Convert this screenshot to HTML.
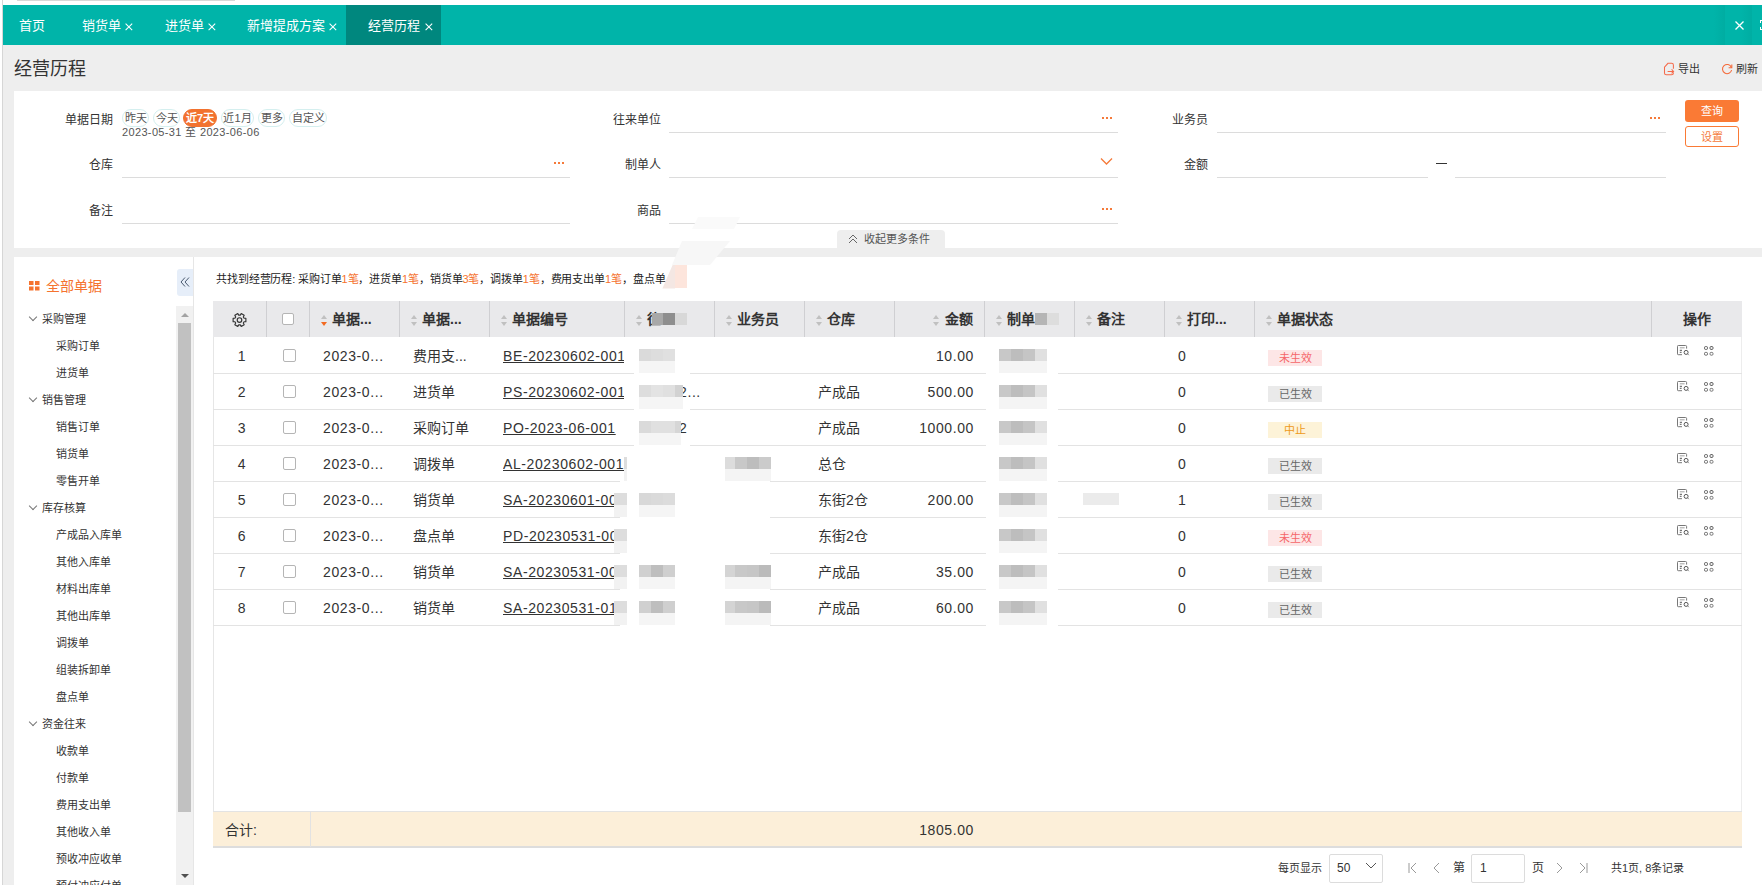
<!DOCTYPE html><html lang="zh-CN"><head><meta charset="utf-8"><style>
*{box-sizing:border-box;margin:0;padding:0}
html,body{width:1762px;height:885px;overflow:hidden;background:#fff;font-family:"Liberation Sans",sans-serif;color:#333}
.a{position:absolute;white-space:nowrap}
.t13{font-size:13px}
.lbl{position:absolute;font-size:12px;line-height:20px;color:#333;text-align:right;white-space:nowrap}
.ul{position:absolute;height:1px;background:#DCDCDC}
.dots{position:absolute;width:11px;height:3px}
.dots i{position:absolute;top:0;width:2px;height:2px;background:#F57A3A}
.pill{position:absolute;top:109px;height:18px;line-height:17px;border:1px solid #D4EFEF;border-radius:9px;font-size:11px;color:#555;text-align:center;white-space:nowrap}
.tree{position:absolute;font-size:11px;line-height:16px;color:#333;white-space:nowrap}
.chev{position:absolute;width:6px;height:6px;border-right:1px solid #777;border-bottom:1px solid #777;transform:rotate(45deg)}
.hd{position:absolute;top:301px;height:36px;line-height:36px;font-size:14px;font-weight:bold;color:#333;white-space:nowrap}
.vs{position:absolute;top:301px;width:1px;height:36px;background:#CFCFD2}
.cell{position:absolute;height:36px;line-height:38px;font-size:14px;color:#333;white-space:nowrap;overflow:hidden}
.num{letter-spacing:0.6px}
.rb{position:absolute;left:213px;width:1529px;height:1px;background:#E3E3E3}
.cb{position:absolute;width:12px;height:12px;border:1px solid #B5B5B5;border-radius:2px;background:#fff}
.sort{position:absolute;width:7px;height:12px}
.sort:before{content:"";position:absolute;left:0;top:0;border-left:3.5px solid transparent;border-right:3.5px solid transparent;border-bottom:4px solid #C0C0C0}
.sort:after{content:"";position:absolute;left:0;top:7px;border-left:3.5px solid transparent;border-right:3.5px solid transparent;border-top:4px solid #C0C0C0}
.sort.on:after{border-top-color:#F26A21}
.tag{position:absolute;height:16px;line-height:16px;width:54px;text-align:center;font-size:11px}
.t-no{background:#FDE6E6;color:#F5666A}
.t-ok{background:#EAEAEA;color:#666}
.t-stop{background:#FDF3D8;color:#EE9A1A}
.blk{position:absolute}
</style></head><body>
<div class="a" style="left:2px;top:0;width:1px;height:885px;background:#D6D6D6"></div>
<div class="a" style="left:17px;top:0;width:218px;height:1px;background:#D8D8D8"></div>
<div class="a" style="left:3px;top:45px;width:1759px;height:840px;background:#EEEEEE"></div>
<div class="a" style="left:3px;top:5px;width:1759px;height:40px;background:#00B4A9"></div>
<div class="a" style="left:346px;top:5px;width:95px;height:40px;background:#00877E"></div>
<div class="a t13" style="left:19px;top:5px;line-height:41px;color:#fff">首页</div>
<div class="a t13" style="left:82px;top:5px;line-height:41px;color:#fff">销货单</div>
<div class="a t13" style="left:165px;top:5px;line-height:41px;color:#fff">进货单</div>
<div class="a t13" style="left:247px;top:5px;line-height:41px;color:#fff">新增提成方案</div>
<div class="a t13" style="left:368px;top:5px;line-height:41px;color:#fff">经营历程</div>
<svg class="a" style="left:124.5px;top:22.5px" width="8" height="8" viewBox="0 0 8 8"><path d="M0.6 0.6L7.2 7.2M7.2 0.6L0.6 7.2" stroke="#fff" stroke-width="1.05"/></svg>
<svg class="a" style="left:207.5px;top:22.5px" width="8" height="8" viewBox="0 0 8 8"><path d="M0.6 0.6L7.2 7.2M7.2 0.6L0.6 7.2" stroke="#fff" stroke-width="1.05"/></svg>
<svg class="a" style="left:328.5px;top:22.5px" width="8" height="8" viewBox="0 0 8 8"><path d="M0.6 0.6L7.2 7.2M7.2 0.6L0.6 7.2" stroke="#fff" stroke-width="1.05"/></svg>
<svg class="a" style="left:424.5px;top:22.5px" width="8" height="8" viewBox="0 0 8 8"><path d="M0.6 0.6L7.2 7.2M7.2 0.6L0.6 7.2" stroke="#fff" stroke-width="1.05"/></svg>
<div class="a" style="left:1714px;top:5px;width:11px;height:40px;background:linear-gradient(to right,rgba(0,80,70,0),rgba(0,80,70,0.07))"></div>
<div class="a" style="left:1741px;top:5px;width:11px;height:40px;background:linear-gradient(to right,rgba(0,80,70,0),rgba(0,80,70,0.07))"></div>
<svg class="a" style="left:1734px;top:20px" width="11" height="11" viewBox="0 0 11 11"><path d="M1.5 1.5L9.5 9.5M9.5 1.5L1.5 9.5" stroke="#fff" stroke-width="1.3"/></svg>
<div class="a" style="left:1760px;top:20px;width:3px;height:3px;border-left:1px solid #fff;border-top:1px solid #fff"></div>
<div class="a" style="left:1760px;top:27px;width:3px;height:3px;border-left:1px solid #fff;border-bottom:1px solid #fff"></div>
<div class="a" style="left:14px;top:57px;font-size:18px;line-height:24px;color:#333">经营历程</div>
<svg class="a" style="left:1663px;top:62px" width="12" height="14" viewBox="0 0 12 14"><path d="M6.5 1.3H8.6Q10.4 1.3 10.4 3.1V6.8M10.4 10.4V11Q10.4 12.8 8.6 12.8H3.3Q1.5 12.8 1.5 11V5.2L4.9 1.3H6.5" fill="none" stroke="#F56A4A" stroke-width="1.05"/><path d="M4.6 9.4H10.6M8.6 7.4L10.6 9.4L8.6 11.4" fill="none" stroke="#F56A4A" stroke-width="1.05"/></svg>
<div class="a" style="left:1678px;top:61px;font-size:11px;line-height:16px;color:#333">导出</div>
<svg class="a" style="left:1721px;top:63px" width="12" height="12" viewBox="0 0 12 12"><path d="M10.3 4.2A4.6 4.6 0 1 0 10.6 7" fill="none" stroke="#F56A3A" stroke-width="1.1"/><path d="M10.8 1.5v3.2H7.6" fill="none" stroke="#F56A3A" stroke-width="1.1"/></svg>
<div class="a" style="left:1736px;top:61px;font-size:11px;line-height:16px;color:#333">刷新</div>
<div class="a" style="left:14px;top:91px;width:1748px;height:157px;background:#fff"></div>
<div class="lbl" style="left:33px;width:80px;top:110px">单据日期</div>
<div class="pill" style="left:122px;width:27px">昨天</div>
<div class="pill" style="left:153px;width:27px">今天</div>
<div class="pill" style="left:183px;width:34px;background:#F2722F;border-color:#F2722F;color:#fff;font-weight:bold">近7天</div>
<div class="pill" style="left:221px;width:33px">近1月</div>
<div class="pill" style="left:258px;width:27px">更多</div>
<div class="pill" style="left:289px;width:38px">自定义</div>
<div class="a" style="left:122px;top:124px;font-size:11px;line-height:16px;color:#555;letter-spacing:0.35px">2023-05-31 至 2023-06-06</div>
<div class="lbl" style="left:33px;width:80px;top:155px">仓库</div>
<div class="ul" style="left:122px;top:177px;width:448px"></div>
<div class="dots" style="left:554px;top:162px"><i style="left:0"></i><i style="left:4px"></i><i style="left:8px"></i></div>
<div class="lbl" style="left:33px;width:80px;top:201px">备注</div>
<div class="ul" style="left:122px;top:223px;width:448px"></div>
<div class="lbl" style="left:581px;width:80px;top:110px">往来单位</div>
<div class="ul" style="left:669px;top:132px;width:449px"></div>
<div class="dots" style="left:1102px;top:117px"><i style="left:0"></i><i style="left:4px"></i><i style="left:8px"></i></div>
<div class="lbl" style="left:581px;width:80px;top:155px">制单人</div>
<div class="ul" style="left:669px;top:177px;width:449px"></div>
<svg class="a" style="left:1100px;top:157px" width="13" height="9" viewBox="0 0 13 9"><path d="M1 1.5l5.5 5.5 5.5-5.5" fill="none" stroke="#F57A3A" stroke-width="1.3"/></svg>
<div class="lbl" style="left:581px;width:80px;top:201px">商品</div>
<div class="ul" style="left:669px;top:223px;width:449px"></div>
<div class="dots" style="left:1102px;top:208px"><i style="left:0"></i><i style="left:4px"></i><i style="left:8px"></i></div>
<div class="lbl" style="left:1128px;width:80px;top:110px">业务员</div>
<div class="ul" style="left:1217px;top:132px;width:449px"></div>
<div class="dots" style="left:1650px;top:117px"><i style="left:0"></i><i style="left:4px"></i><i style="left:8px"></i></div>
<div class="lbl" style="left:1128px;width:80px;top:155px">金额</div>
<div class="ul" style="left:1217px;top:177px;width:211px"></div>
<div class="a" style="left:1436px;top:163px;width:11px;height:1px;background:#333"></div>
<div class="ul" style="left:1455px;top:177px;width:211px"></div>
<div class="a" style="left:1685px;top:100px;width:54px;height:22px;background:#FA7A35;border-radius:3px;color:#fff;font-size:11px;line-height:22px;text-align:center">查询</div>
<div class="a" style="left:1685px;top:126px;width:54px;height:21px;border:1px solid #FA7A35;border-radius:3px;color:#F57A3A;font-size:11px;line-height:20px;text-align:center;background:#fff">设置</div>
<div class="a" style="left:837px;top:230px;width:108px;height:18px;background:#EEEEEE;border-radius:4px 4px 0 0"></div>
<svg class="a" style="left:848px;top:234px" width="10" height="10" viewBox="0 0 10 10"><path d="M1 5l4-4 4 4M1 9l4-4 4 4" fill="none" stroke="#666" stroke-width="1"/></svg>
<div class="a" style="left:864px;top:231px;font-size:11px;line-height:16px;color:#555">收起更多条件</div>
<div class="a" style="left:14px;top:257px;width:179px;height:628px;background:#fff"></div>
<div class="a" style="left:193px;top:257px;width:1px;height:628px;background:#E6E6E6"></div>
<svg class="a" style="left:29px;top:281px" width="11" height="10" viewBox="0 0 11 10"><rect x="0" y="0" width="4.5" height="4" fill="#F5732F"/><rect x="6" y="0" width="4.5" height="4" fill="#F5732F"/><rect x="0" y="5.5" width="4.5" height="4" fill="#F5732F"/><rect x="6" y="5.5" width="4.5" height="4" fill="#F5732F"/></svg>
<div class="a" style="left:46px;top:276px;font-size:14px;line-height:20px;color:#F5732F">全部单据</div>
<div class="a" style="left:177px;top:269px;width:16px;height:27px;background:#E6EEF9;border-radius:3px 0 0 3px"></div>
<svg class="a" style="left:180px;top:276px" width="10" height="12" viewBox="0 0 10 12"><path d="M5 1.5L1 6l4 4.5M9 1.5L5 6l4 4.5" fill="none" stroke="#4A5A70" stroke-width="1"/></svg>
<div class="a" style="left:176px;top:306px;width:17px;height:579px;background:#F1F1F1"></div>
<div class="a" style="left:178px;top:323px;width:13px;height:489px;background:#C1C1C1"></div>
<div class="a" style="left:181px;top:313px;width:0;height:0;border-left:4px solid transparent;border-right:4px solid transparent;border-bottom:4px solid #A3A3A3"></div>
<div class="a" style="left:181px;top:874px;width:0;height:0;border-left:4px solid transparent;border-right:4px solid transparent;border-top:4px solid #505050"></div>
<div class="chev" style="left:30px;top:314.3px"></div>
<div class="tree" style="left:42px;top:311.3px">采购管理</div>
<div class="tree" style="left:56px;top:338.3px">采购订单</div>
<div class="tree" style="left:56px;top:365.3px">进货单</div>
<div class="chev" style="left:30px;top:395.3px"></div>
<div class="tree" style="left:42px;top:392.3px">销售管理</div>
<div class="tree" style="left:56px;top:419.3px">销售订单</div>
<div class="tree" style="left:56px;top:446.3px">销货单</div>
<div class="tree" style="left:56px;top:473.3px">零售开单</div>
<div class="chev" style="left:30px;top:503.3px"></div>
<div class="tree" style="left:42px;top:500.3px">库存核算</div>
<div class="tree" style="left:56px;top:527.3px">产成品入库单</div>
<div class="tree" style="left:56px;top:554.3px">其他入库单</div>
<div class="tree" style="left:56px;top:581.3px">材料出库单</div>
<div class="tree" style="left:56px;top:608.3px">其他出库单</div>
<div class="tree" style="left:56px;top:635.3px">调拨单</div>
<div class="tree" style="left:56px;top:662.3px">组装拆卸单</div>
<div class="tree" style="left:56px;top:689.3px">盘点单</div>
<div class="chev" style="left:30px;top:719.3px"></div>
<div class="tree" style="left:42px;top:716.3px">资金往来</div>
<div class="tree" style="left:56px;top:743.3px">收款单</div>
<div class="tree" style="left:56px;top:770.3px">付款单</div>
<div class="tree" style="left:56px;top:797.3px">费用支出单</div>
<div class="tree" style="left:56px;top:824.3px">其他收入单</div>
<div class="tree" style="left:56px;top:851.3px">预收冲应收单</div>
<div class="tree" style="left:56px;top:878.3px">预付冲应付单</div>
<div class="a" style="left:194px;top:257px;width:1568px;height:628px;background:#fff"></div>
<div class="a" style="left:216px;top:271px;font-size:11px;line-height:16px;color:#222;letter-spacing:-0.12px">共找到经营历程: 采购订单<span style="color:#F5732F">1笔</span>，进货单<span style="color:#F5732F">1笔</span>，销货单<span style="color:#F5732F">3笔</span>，调拨单<span style="color:#F5732F">1笔</span>，费用支出单<span style="color:#F5732F">1笔</span>，盘点单</div>
<svg class="a" style="left:660px;top:265px" width="16" height="24"><path d="M12.6 0H15V23.5H2.4Z" fill="#F4E7E3"/></svg>
<div class="blk" style="left:675px;top:265px;width:12px;height:23px;background:#FDE5DC"></div>
<svg class="a" style="left:660px;top:215px" width="100" height="52"><path d="M38 2H80L74 14H32Z" fill="#FAFAFA"/><path d="M22 26H70L50 50H12Z" fill="#F7F7F7"/></svg>
<div class="a" style="left:213px;top:301px;width:1529px;height:36px;background:#E9E9EB"></div>
<div class="vs" style="left:266px"></div>
<div class="vs" style="left:309px"></div>
<div class="vs" style="left:399px"></div>
<div class="vs" style="left:489px"></div>
<div class="vs" style="left:624px"></div>
<div class="vs" style="left:714px"></div>
<div class="vs" style="left:804px"></div>
<div class="vs" style="left:894px"></div>
<div class="vs" style="left:984px"></div>
<div class="vs" style="left:1074px"></div>
<div class="vs" style="left:1164px"></div>
<div class="vs" style="left:1254px"></div>
<div class="vs" style="left:1651px"></div>
<div class="a" style="left:213px;top:337px;width:1px;height:511px;background:#E6E6E6"></div>
<div class="a" style="left:1741px;top:337px;width:1px;height:511px;background:#EDEDED"></div>
<svg class="a" style="left:231.5px;top:312.5px" width="15" height="14" viewBox="0 0 15 14"><path d="M12.07 5.24 L13.88 5.29 L13.88 8.71 L12.07 8.76 L11.31 10.08 L12.17 11.67 L9.21 13.38 L8.27 11.84 L6.73 11.84 L5.79 13.38 L2.83 11.67 L3.69 10.08 L2.93 8.76 L1.12 8.71 L1.12 5.29 L2.93 5.24 L3.69 3.92 L2.83 2.33 L5.79 0.62 L6.73 2.16 L8.27 2.16 L9.21 0.62 L12.17 2.33 L11.31 3.92Z" fill="none" stroke="#333" stroke-width="1.15" stroke-linejoin="round"/><circle cx="7.5" cy="7" r="2.3" fill="none" stroke="#333" stroke-width="1.15"/></svg>
<div class="cb" style="left:282px;top:313px"></div>
<div class="sort on" style="left:321px;top:315px"></div>
<div class="hd" style="left:332px">单据...</div>
<div class="sort" style="left:411px;top:315px"></div>
<div class="hd" style="left:422px">单据...</div>
<div class="sort" style="left:501px;top:315px"></div>
<div class="hd" style="left:512px">单据编号</div>
<div class="sort" style="left:636px;top:315px"></div>
<div class="hd" style="left:647px">往</div>
<div class="sort" style="left:726px;top:315px"></div>
<div class="hd" style="left:737px">业务员</div>
<div class="sort" style="left:816px;top:315px"></div>
<div class="hd" style="left:827px">仓库</div>
<div class="sort" style="left:996px;top:315px"></div>
<div class="hd" style="left:1007px">制单</div>
<div class="sort" style="left:1086px;top:315px"></div>
<div class="hd" style="left:1097px">备注</div>
<div class="sort" style="left:1176px;top:315px"></div>
<div class="hd" style="left:1187px">打印...</div>
<div class="sort" style="left:1266px;top:315px"></div>
<div class="hd" style="left:1277px">单据状态</div>
<div class="sort" style="left:933px;top:315px"></div>
<div class="hd" style="left:945px">金额</div>
<div class="hd" style="left:1683px">操作</div>
<div class="blk" style="left:652px;top:313px;width:11px;height:12px;background:#A8A8A8"></div>
<div class="blk" style="left:663px;top:313px;width:12px;height:12px;background:#8E8E8E"></div>
<div class="blk" style="left:675px;top:313px;width:12px;height:12px;background:#D8D8D8"></div>
<div class="blk" style="left:1035px;top:313px;width:12px;height:12px;background:#B5B5B5"></div>
<div class="blk" style="left:1047px;top:313px;width:12px;height:12px;background:#DDDDDD"></div>
<div class="cell num" style="left:215px;width:54px;top:337px;text-align:center">1</div>
<div class="cb" style="left:283px;top:349px;width:13px;height:13px"></div>
<div class="cell num" style="left:323px;top:337px">2023-0...</div>
<div class="cell" style="left:413px;top:337px">费用支...</div>
<div class="cell num" style="left:503px;width:121px;top:337px;text-decoration:underline">BE-20230602-001</div>
<div class="cell num" style="left:884px;width:90px;top:337px;text-align:right">10.00</div>
<div class="cell num" style="left:1178px;top:337px">0</div>
<div class="tag t-no" style="left:1268px;top:350px">未生效</div>
<svg class="a" style="left:1677px;top:345px" width="13" height="12" viewBox="0 0 13 12"><path d="M9.6 3.6V1.5Q9.6 0.5 8.6 0.5H1.3Q0.5 0.5 0.5 1.3V8.9Q0.5 9.7 1.3 9.7H5" fill="none" stroke="#777" stroke-width="1"/><path d="M2.8 2.8H7.6" stroke="#AAA" stroke-width="1.1"/><path d="M2.8 5.3H5M2.8 7.3H4.6" stroke="#555" stroke-width="1"/><circle cx="9.1" cy="7.4" r="2" fill="none" stroke="#555" stroke-width="1"/><path d="M10.5 8.8L11.8 10.2" stroke="#888" stroke-width="1"/></svg>
<svg class="a" style="left:1703px;top:345px" width="12" height="12" viewBox="0 0 12 12"><rect x="1.5" y="1.6" width="3" height="2.8" rx="1" fill="none" stroke="#555" stroke-width="1"/><rect x="7" y="1.6" width="3" height="2.8" rx="1" fill="none" stroke="#555" stroke-width="1"/><rect x="1.5" y="7.4" width="3" height="2.8" rx="1.1" fill="none" stroke="#666" stroke-width="1"/><rect x="7" y="7.4" width="3" height="2.8" rx="1.1" fill="none" stroke="#777" stroke-width="1"/></svg>
<div class="rb" style="top:373px"></div>
<div class="cell num" style="left:215px;width:54px;top:373px;text-align:center">2</div>
<div class="cb" style="left:283px;top:385px;width:13px;height:13px"></div>
<div class="cell num" style="left:323px;top:373px">2023-0...</div>
<div class="cell" style="left:413px;top:373px">进货单</div>
<div class="cell num" style="left:503px;width:121px;top:373px;text-decoration:underline">PS-20230602-001</div>
<div class="cell num" style="left:679px;top:373px">2...</div>
<div class="cell" style="left:818px;top:373px">产成品</div>
<div class="cell num" style="left:884px;width:90px;top:373px;text-align:right">500.00</div>
<div class="cell num" style="left:1178px;top:373px">0</div>
<div class="tag t-ok" style="left:1268px;top:386px">已生效</div>
<svg class="a" style="left:1677px;top:381px" width="13" height="12" viewBox="0 0 13 12"><path d="M9.6 3.6V1.5Q9.6 0.5 8.6 0.5H1.3Q0.5 0.5 0.5 1.3V8.9Q0.5 9.7 1.3 9.7H5" fill="none" stroke="#777" stroke-width="1"/><path d="M2.8 2.8H7.6" stroke="#AAA" stroke-width="1.1"/><path d="M2.8 5.3H5M2.8 7.3H4.6" stroke="#555" stroke-width="1"/><circle cx="9.1" cy="7.4" r="2" fill="none" stroke="#555" stroke-width="1"/><path d="M10.5 8.8L11.8 10.2" stroke="#888" stroke-width="1"/></svg>
<svg class="a" style="left:1703px;top:381px" width="12" height="12" viewBox="0 0 12 12"><rect x="1.5" y="1.6" width="3" height="2.8" rx="1" fill="none" stroke="#555" stroke-width="1"/><rect x="7" y="1.6" width="3" height="2.8" rx="1" fill="none" stroke="#555" stroke-width="1"/><rect x="1.5" y="7.4" width="3" height="2.8" rx="1.1" fill="none" stroke="#666" stroke-width="1"/><rect x="7" y="7.4" width="3" height="2.8" rx="1.1" fill="none" stroke="#777" stroke-width="1"/></svg>
<div class="rb" style="top:409px"></div>
<div class="cell num" style="left:215px;width:54px;top:409px;text-align:center">3</div>
<div class="cb" style="left:283px;top:421px;width:13px;height:13px"></div>
<div class="cell num" style="left:323px;top:409px">2023-0...</div>
<div class="cell" style="left:413px;top:409px">采购订单</div>
<div class="cell num" style="left:503px;width:121px;top:409px;text-decoration:underline">PO-2023-06-001</div>
<div class="cell num" style="left:679px;top:409px">2</div>
<div class="cell" style="left:818px;top:409px">产成品</div>
<div class="cell num" style="left:884px;width:90px;top:409px;text-align:right">1000.00</div>
<div class="cell num" style="left:1178px;top:409px">0</div>
<div class="tag t-stop" style="left:1268px;top:422px">中止</div>
<svg class="a" style="left:1677px;top:417px" width="13" height="12" viewBox="0 0 13 12"><path d="M9.6 3.6V1.5Q9.6 0.5 8.6 0.5H1.3Q0.5 0.5 0.5 1.3V8.9Q0.5 9.7 1.3 9.7H5" fill="none" stroke="#777" stroke-width="1"/><path d="M2.8 2.8H7.6" stroke="#AAA" stroke-width="1.1"/><path d="M2.8 5.3H5M2.8 7.3H4.6" stroke="#555" stroke-width="1"/><circle cx="9.1" cy="7.4" r="2" fill="none" stroke="#555" stroke-width="1"/><path d="M10.5 8.8L11.8 10.2" stroke="#888" stroke-width="1"/></svg>
<svg class="a" style="left:1703px;top:417px" width="12" height="12" viewBox="0 0 12 12"><rect x="1.5" y="1.6" width="3" height="2.8" rx="1" fill="none" stroke="#555" stroke-width="1"/><rect x="7" y="1.6" width="3" height="2.8" rx="1" fill="none" stroke="#555" stroke-width="1"/><rect x="1.5" y="7.4" width="3" height="2.8" rx="1.1" fill="none" stroke="#666" stroke-width="1"/><rect x="7" y="7.4" width="3" height="2.8" rx="1.1" fill="none" stroke="#777" stroke-width="1"/></svg>
<div class="rb" style="top:445px"></div>
<div class="cell num" style="left:215px;width:54px;top:445px;text-align:center">4</div>
<div class="cb" style="left:283px;top:457px;width:13px;height:13px"></div>
<div class="cell num" style="left:323px;top:445px">2023-0...</div>
<div class="cell" style="left:413px;top:445px">调拨单</div>
<div class="cell num" style="left:503px;width:121px;top:445px;text-decoration:underline">AL-20230602-001</div>
<div class="cell" style="left:818px;top:445px">总仓</div>
<div class="cell num" style="left:1178px;top:445px">0</div>
<div class="tag t-ok" style="left:1268px;top:458px">已生效</div>
<svg class="a" style="left:1677px;top:453px" width="13" height="12" viewBox="0 0 13 12"><path d="M9.6 3.6V1.5Q9.6 0.5 8.6 0.5H1.3Q0.5 0.5 0.5 1.3V8.9Q0.5 9.7 1.3 9.7H5" fill="none" stroke="#777" stroke-width="1"/><path d="M2.8 2.8H7.6" stroke="#AAA" stroke-width="1.1"/><path d="M2.8 5.3H5M2.8 7.3H4.6" stroke="#555" stroke-width="1"/><circle cx="9.1" cy="7.4" r="2" fill="none" stroke="#555" stroke-width="1"/><path d="M10.5 8.8L11.8 10.2" stroke="#888" stroke-width="1"/></svg>
<svg class="a" style="left:1703px;top:453px" width="12" height="12" viewBox="0 0 12 12"><rect x="1.5" y="1.6" width="3" height="2.8" rx="1" fill="none" stroke="#555" stroke-width="1"/><rect x="7" y="1.6" width="3" height="2.8" rx="1" fill="none" stroke="#555" stroke-width="1"/><rect x="1.5" y="7.4" width="3" height="2.8" rx="1.1" fill="none" stroke="#666" stroke-width="1"/><rect x="7" y="7.4" width="3" height="2.8" rx="1.1" fill="none" stroke="#777" stroke-width="1"/></svg>
<div class="rb" style="top:481px"></div>
<div class="cell num" style="left:215px;width:54px;top:481px;text-align:center">5</div>
<div class="cb" style="left:283px;top:493px;width:13px;height:13px"></div>
<div class="cell num" style="left:323px;top:481px">2023-0...</div>
<div class="cell" style="left:413px;top:481px">销货单</div>
<div class="cell num" style="left:503px;width:121px;top:481px;text-decoration:underline">SA-20230601-001</div>
<div class="cell" style="left:818px;top:481px">东街2仓</div>
<div class="cell num" style="left:884px;width:90px;top:481px;text-align:right">200.00</div>
<div class="cell num" style="left:1178px;top:481px">1</div>
<div class="tag t-ok" style="left:1268px;top:494px">已生效</div>
<svg class="a" style="left:1677px;top:489px" width="13" height="12" viewBox="0 0 13 12"><path d="M9.6 3.6V1.5Q9.6 0.5 8.6 0.5H1.3Q0.5 0.5 0.5 1.3V8.9Q0.5 9.7 1.3 9.7H5" fill="none" stroke="#777" stroke-width="1"/><path d="M2.8 2.8H7.6" stroke="#AAA" stroke-width="1.1"/><path d="M2.8 5.3H5M2.8 7.3H4.6" stroke="#555" stroke-width="1"/><circle cx="9.1" cy="7.4" r="2" fill="none" stroke="#555" stroke-width="1"/><path d="M10.5 8.8L11.8 10.2" stroke="#888" stroke-width="1"/></svg>
<svg class="a" style="left:1703px;top:489px" width="12" height="12" viewBox="0 0 12 12"><rect x="1.5" y="1.6" width="3" height="2.8" rx="1" fill="none" stroke="#555" stroke-width="1"/><rect x="7" y="1.6" width="3" height="2.8" rx="1" fill="none" stroke="#555" stroke-width="1"/><rect x="1.5" y="7.4" width="3" height="2.8" rx="1.1" fill="none" stroke="#666" stroke-width="1"/><rect x="7" y="7.4" width="3" height="2.8" rx="1.1" fill="none" stroke="#777" stroke-width="1"/></svg>
<div class="rb" style="top:517px"></div>
<div class="cell num" style="left:215px;width:54px;top:517px;text-align:center">6</div>
<div class="cb" style="left:283px;top:529px;width:13px;height:13px"></div>
<div class="cell num" style="left:323px;top:517px">2023-0...</div>
<div class="cell" style="left:413px;top:517px">盘点单</div>
<div class="cell num" style="left:503px;width:121px;top:517px;text-decoration:underline">PD-20230531-001</div>
<div class="cell" style="left:818px;top:517px">东街2仓</div>
<div class="cell num" style="left:1178px;top:517px">0</div>
<div class="tag t-no" style="left:1268px;top:530px">未生效</div>
<svg class="a" style="left:1677px;top:525px" width="13" height="12" viewBox="0 0 13 12"><path d="M9.6 3.6V1.5Q9.6 0.5 8.6 0.5H1.3Q0.5 0.5 0.5 1.3V8.9Q0.5 9.7 1.3 9.7H5" fill="none" stroke="#777" stroke-width="1"/><path d="M2.8 2.8H7.6" stroke="#AAA" stroke-width="1.1"/><path d="M2.8 5.3H5M2.8 7.3H4.6" stroke="#555" stroke-width="1"/><circle cx="9.1" cy="7.4" r="2" fill="none" stroke="#555" stroke-width="1"/><path d="M10.5 8.8L11.8 10.2" stroke="#888" stroke-width="1"/></svg>
<svg class="a" style="left:1703px;top:525px" width="12" height="12" viewBox="0 0 12 12"><rect x="1.5" y="1.6" width="3" height="2.8" rx="1" fill="none" stroke="#555" stroke-width="1"/><rect x="7" y="1.6" width="3" height="2.8" rx="1" fill="none" stroke="#555" stroke-width="1"/><rect x="1.5" y="7.4" width="3" height="2.8" rx="1.1" fill="none" stroke="#666" stroke-width="1"/><rect x="7" y="7.4" width="3" height="2.8" rx="1.1" fill="none" stroke="#777" stroke-width="1"/></svg>
<div class="rb" style="top:553px"></div>
<div class="cell num" style="left:215px;width:54px;top:553px;text-align:center">7</div>
<div class="cb" style="left:283px;top:565px;width:13px;height:13px"></div>
<div class="cell num" style="left:323px;top:553px">2023-0...</div>
<div class="cell" style="left:413px;top:553px">销货单</div>
<div class="cell num" style="left:503px;width:121px;top:553px;text-decoration:underline">SA-20230531-001</div>
<div class="cell" style="left:818px;top:553px">产成品</div>
<div class="cell num" style="left:884px;width:90px;top:553px;text-align:right">35.00</div>
<div class="cell num" style="left:1178px;top:553px">0</div>
<div class="tag t-ok" style="left:1268px;top:566px">已生效</div>
<svg class="a" style="left:1677px;top:561px" width="13" height="12" viewBox="0 0 13 12"><path d="M9.6 3.6V1.5Q9.6 0.5 8.6 0.5H1.3Q0.5 0.5 0.5 1.3V8.9Q0.5 9.7 1.3 9.7H5" fill="none" stroke="#777" stroke-width="1"/><path d="M2.8 2.8H7.6" stroke="#AAA" stroke-width="1.1"/><path d="M2.8 5.3H5M2.8 7.3H4.6" stroke="#555" stroke-width="1"/><circle cx="9.1" cy="7.4" r="2" fill="none" stroke="#555" stroke-width="1"/><path d="M10.5 8.8L11.8 10.2" stroke="#888" stroke-width="1"/></svg>
<svg class="a" style="left:1703px;top:561px" width="12" height="12" viewBox="0 0 12 12"><rect x="1.5" y="1.6" width="3" height="2.8" rx="1" fill="none" stroke="#555" stroke-width="1"/><rect x="7" y="1.6" width="3" height="2.8" rx="1" fill="none" stroke="#555" stroke-width="1"/><rect x="1.5" y="7.4" width="3" height="2.8" rx="1.1" fill="none" stroke="#666" stroke-width="1"/><rect x="7" y="7.4" width="3" height="2.8" rx="1.1" fill="none" stroke="#777" stroke-width="1"/></svg>
<div class="rb" style="top:589px"></div>
<div class="cell num" style="left:215px;width:54px;top:589px;text-align:center">8</div>
<div class="cb" style="left:283px;top:601px;width:13px;height:13px"></div>
<div class="cell num" style="left:323px;top:589px">2023-0...</div>
<div class="cell" style="left:413px;top:589px">销货单</div>
<div class="cell num" style="left:503px;width:121px;top:589px;text-decoration:underline">SA-20230531-011</div>
<div class="cell" style="left:818px;top:589px">产成品</div>
<div class="cell num" style="left:884px;width:90px;top:589px;text-align:right">60.00</div>
<div class="cell num" style="left:1178px;top:589px">0</div>
<div class="tag t-ok" style="left:1268px;top:602px">已生效</div>
<svg class="a" style="left:1677px;top:597px" width="13" height="12" viewBox="0 0 13 12"><path d="M9.6 3.6V1.5Q9.6 0.5 8.6 0.5H1.3Q0.5 0.5 0.5 1.3V8.9Q0.5 9.7 1.3 9.7H5" fill="none" stroke="#777" stroke-width="1"/><path d="M2.8 2.8H7.6" stroke="#AAA" stroke-width="1.1"/><path d="M2.8 5.3H5M2.8 7.3H4.6" stroke="#555" stroke-width="1"/><circle cx="9.1" cy="7.4" r="2" fill="none" stroke="#555" stroke-width="1"/><path d="M10.5 8.8L11.8 10.2" stroke="#888" stroke-width="1"/></svg>
<svg class="a" style="left:1703px;top:597px" width="12" height="12" viewBox="0 0 12 12"><rect x="1.5" y="1.6" width="3" height="2.8" rx="1" fill="none" stroke="#555" stroke-width="1"/><rect x="7" y="1.6" width="3" height="2.8" rx="1" fill="none" stroke="#555" stroke-width="1"/><rect x="1.5" y="7.4" width="3" height="2.8" rx="1.1" fill="none" stroke="#666" stroke-width="1"/><rect x="7" y="7.4" width="3" height="2.8" rx="1.1" fill="none" stroke="#777" stroke-width="1"/></svg>
<div class="rb" style="top:625px"></div>
<div class="blk" style="left:634px;top:372px;width:56px;height:3px;background:#fff"></div>
<div class="blk" style="left:634px;top:408px;width:56px;height:3px;background:#fff"></div>
<div class="blk" style="left:634px;top:444px;width:56px;height:3px;background:#fff"></div>
<div class="blk" style="left:620px;top:480px;width:150px;height:3px;background:#fff"></div>
<div class="blk" style="left:620px;top:516px;width:150px;height:3px;background:#fff"></div>
<div class="blk" style="left:620px;top:552px;width:150px;height:3px;background:#fff"></div>
<div class="blk" style="left:620px;top:588px;width:150px;height:3px;background:#fff"></div>
<div class="blk" style="left:620px;top:624px;width:150px;height:3px;background:#fff"></div>
<div class="blk" style="left:986px;top:372px;width:72px;height:3px;background:#fff"></div>
<div class="blk" style="left:986px;top:408px;width:72px;height:3px;background:#fff"></div>
<div class="blk" style="left:986px;top:444px;width:72px;height:3px;background:#fff"></div>
<div class="blk" style="left:986px;top:480px;width:72px;height:3px;background:#fff"></div>
<div class="blk" style="left:986px;top:516px;width:72px;height:3px;background:#fff"></div>
<div class="blk" style="left:986px;top:552px;width:72px;height:3px;background:#fff"></div>
<div class="blk" style="left:986px;top:588px;width:72px;height:3px;background:#fff"></div>
<div class="blk" style="left:986px;top:624px;width:72px;height:3px;background:#fff"></div>
<div class="blk" style="left:639px;top:349px;width:12px;height:12px;background:#DADADA"></div>
<div class="blk" style="left:639px;top:361px;width:12px;height:12px;background:#F5F5F5"></div>
<div class="blk" style="left:651px;top:349px;width:12px;height:12px;background:#DDDDDD"></div>
<div class="blk" style="left:651px;top:361px;width:12px;height:12px;background:#F5F5F5"></div>
<div class="blk" style="left:663px;top:349px;width:12px;height:12px;background:#E0E0E0"></div>
<div class="blk" style="left:663px;top:361px;width:12px;height:12px;background:#F5F5F5"></div>
<div class="blk" style="left:639px;top:385px;width:12px;height:12px;background:#DDDDDD"></div>
<div class="blk" style="left:639px;top:397px;width:12px;height:12px;background:#F5F5F5"></div>
<div class="blk" style="left:651px;top:385px;width:12px;height:12px;background:#E3E3E3"></div>
<div class="blk" style="left:651px;top:397px;width:12px;height:12px;background:#F5F5F5"></div>
<div class="blk" style="left:663px;top:385px;width:12px;height:12px;background:#E0E0E0"></div>
<div class="blk" style="left:663px;top:397px;width:12px;height:12px;background:#F5F5F5"></div>
<div class="blk" style="left:675px;top:385px;width:8px;height:12px;background:#D2D2D2"></div>
<div class="blk" style="left:675px;top:397px;width:8px;height:12px;background:#F5F5F5"></div>
<div class="blk" style="left:639px;top:421px;width:12px;height:12px;background:#DADADA"></div>
<div class="blk" style="left:639px;top:433px;width:12px;height:12px;background:#F5F5F5"></div>
<div class="blk" style="left:651px;top:421px;width:12px;height:12px;background:#E0E0E0"></div>
<div class="blk" style="left:651px;top:433px;width:12px;height:12px;background:#F5F5F5"></div>
<div class="blk" style="left:663px;top:421px;width:12px;height:12px;background:#E0E0E0"></div>
<div class="blk" style="left:663px;top:433px;width:12px;height:12px;background:#F5F5F5"></div>
<div class="blk" style="left:675px;top:421px;width:6px;height:12px;background:#D6D6D6"></div>
<div class="blk" style="left:675px;top:433px;width:6px;height:12px;background:#F5F5F5"></div>
<div class="blk" style="left:639px;top:493px;width:12px;height:12px;background:#D8D8D8"></div>
<div class="blk" style="left:639px;top:505px;width:12px;height:12px;background:#F5F5F5"></div>
<div class="blk" style="left:651px;top:493px;width:12px;height:12px;background:#DADADA"></div>
<div class="blk" style="left:651px;top:505px;width:12px;height:12px;background:#F5F5F5"></div>
<div class="blk" style="left:663px;top:493px;width:12px;height:12px;background:#DCDCDC"></div>
<div class="blk" style="left:663px;top:505px;width:12px;height:12px;background:#F5F5F5"></div>
<div class="blk" style="left:639px;top:565px;width:12px;height:12px;background:#D0D0D0"></div>
<div class="blk" style="left:639px;top:577px;width:12px;height:12px;background:#F5F5F5"></div>
<div class="blk" style="left:651px;top:565px;width:12px;height:12px;background:#BEBEBE"></div>
<div class="blk" style="left:651px;top:577px;width:12px;height:12px;background:#F5F5F5"></div>
<div class="blk" style="left:663px;top:565px;width:12px;height:12px;background:#CFCFCF"></div>
<div class="blk" style="left:663px;top:577px;width:12px;height:12px;background:#F5F5F5"></div>
<div class="blk" style="left:639px;top:601px;width:12px;height:12px;background:#D0D0D0"></div>
<div class="blk" style="left:639px;top:613px;width:12px;height:12px;background:#F5F5F5"></div>
<div class="blk" style="left:651px;top:601px;width:12px;height:12px;background:#BEBEBE"></div>
<div class="blk" style="left:651px;top:613px;width:12px;height:12px;background:#F5F5F5"></div>
<div class="blk" style="left:663px;top:601px;width:12px;height:12px;background:#CFCFCF"></div>
<div class="blk" style="left:663px;top:613px;width:12px;height:12px;background:#F5F5F5"></div>
<div class="blk" style="left:624px;top:457px;width:3px;height:12px;background:#DDDDDD"></div>
<div class="blk" style="left:624px;top:469px;width:3px;height:12px;background:#F2F2F2"></div>
<div class="blk" style="left:614px;top:493px;width:13px;height:12px;background:#DDDDDD"></div>
<div class="blk" style="left:614px;top:505px;width:13px;height:12px;background:#F2F2F2"></div>
<div class="blk" style="left:614px;top:529px;width:13px;height:12px;background:#DDDDDD"></div>
<div class="blk" style="left:614px;top:541px;width:13px;height:12px;background:#F2F2F2"></div>
<div class="blk" style="left:614px;top:565px;width:13px;height:12px;background:#DDDDDD"></div>
<div class="blk" style="left:614px;top:577px;width:13px;height:12px;background:#F2F2F2"></div>
<div class="blk" style="left:614px;top:601px;width:13px;height:12px;background:#DDDDDD"></div>
<div class="blk" style="left:614px;top:613px;width:13px;height:12px;background:#F2F2F2"></div>
<div class="blk" style="left:725px;top:457px;width:10px;height:12px;background:#DCDCDC"></div>
<div class="blk" style="left:725px;top:469px;width:10px;height:12px;background:#F4F4F4"></div>
<div class="blk" style="left:735px;top:457px;width:12px;height:12px;background:#C8C8C8"></div>
<div class="blk" style="left:735px;top:469px;width:12px;height:12px;background:#F4F4F4"></div>
<div class="blk" style="left:747px;top:457px;width:12px;height:12px;background:#BDBDBD"></div>
<div class="blk" style="left:747px;top:469px;width:12px;height:12px;background:#F4F4F4"></div>
<div class="blk" style="left:759px;top:457px;width:12px;height:12px;background:#CBCBCB"></div>
<div class="blk" style="left:759px;top:469px;width:12px;height:12px;background:#F4F4F4"></div>
<div class="blk" style="left:725px;top:565px;width:10px;height:12px;background:#D4D4D4"></div>
<div class="blk" style="left:725px;top:577px;width:10px;height:12px;background:#F4F4F4"></div>
<div class="blk" style="left:735px;top:565px;width:12px;height:12px;background:#C8C8C8"></div>
<div class="blk" style="left:735px;top:577px;width:12px;height:12px;background:#F4F4F4"></div>
<div class="blk" style="left:747px;top:565px;width:12px;height:12px;background:#C6C6C6"></div>
<div class="blk" style="left:747px;top:577px;width:12px;height:12px;background:#F4F4F4"></div>
<div class="blk" style="left:759px;top:565px;width:12px;height:12px;background:#BBBBBB"></div>
<div class="blk" style="left:759px;top:577px;width:12px;height:12px;background:#F4F4F4"></div>
<div class="blk" style="left:725px;top:601px;width:10px;height:12px;background:#D4D4D4"></div>
<div class="blk" style="left:725px;top:613px;width:10px;height:12px;background:#F4F4F4"></div>
<div class="blk" style="left:735px;top:601px;width:12px;height:12px;background:#C8C8C8"></div>
<div class="blk" style="left:735px;top:613px;width:12px;height:12px;background:#F4F4F4"></div>
<div class="blk" style="left:747px;top:601px;width:12px;height:12px;background:#C6C6C6"></div>
<div class="blk" style="left:747px;top:613px;width:12px;height:12px;background:#F4F4F4"></div>
<div class="blk" style="left:759px;top:601px;width:12px;height:12px;background:#BBBBBB"></div>
<div class="blk" style="left:759px;top:613px;width:12px;height:12px;background:#F4F4F4"></div>
<div class="blk" style="left:999px;top:349px;width:12px;height:12px;background:#C8C8C8"></div>
<div class="blk" style="left:999px;top:361px;width:12px;height:12px;background:#F4F4F4"></div>
<div class="blk" style="left:1011px;top:349px;width:12px;height:12px;background:#BDBDBD"></div>
<div class="blk" style="left:1011px;top:361px;width:12px;height:12px;background:#F4F4F4"></div>
<div class="blk" style="left:1023px;top:349px;width:12px;height:12px;background:#C5C5C5"></div>
<div class="blk" style="left:1023px;top:361px;width:12px;height:12px;background:#F4F4F4"></div>
<div class="blk" style="left:1035px;top:349px;width:12px;height:12px;background:#E0E0E0"></div>
<div class="blk" style="left:1035px;top:361px;width:12px;height:12px;background:#F4F4F4"></div>
<div class="blk" style="left:999px;top:385px;width:12px;height:12px;background:#C8C8C8"></div>
<div class="blk" style="left:999px;top:397px;width:12px;height:12px;background:#F4F4F4"></div>
<div class="blk" style="left:1011px;top:385px;width:12px;height:12px;background:#BDBDBD"></div>
<div class="blk" style="left:1011px;top:397px;width:12px;height:12px;background:#F4F4F4"></div>
<div class="blk" style="left:1023px;top:385px;width:12px;height:12px;background:#C5C5C5"></div>
<div class="blk" style="left:1023px;top:397px;width:12px;height:12px;background:#F4F4F4"></div>
<div class="blk" style="left:1035px;top:385px;width:12px;height:12px;background:#E0E0E0"></div>
<div class="blk" style="left:1035px;top:397px;width:12px;height:12px;background:#F4F4F4"></div>
<div class="blk" style="left:999px;top:421px;width:12px;height:12px;background:#C8C8C8"></div>
<div class="blk" style="left:999px;top:433px;width:12px;height:12px;background:#F4F4F4"></div>
<div class="blk" style="left:1011px;top:421px;width:12px;height:12px;background:#BDBDBD"></div>
<div class="blk" style="left:1011px;top:433px;width:12px;height:12px;background:#F4F4F4"></div>
<div class="blk" style="left:1023px;top:421px;width:12px;height:12px;background:#C5C5C5"></div>
<div class="blk" style="left:1023px;top:433px;width:12px;height:12px;background:#F4F4F4"></div>
<div class="blk" style="left:1035px;top:421px;width:12px;height:12px;background:#E0E0E0"></div>
<div class="blk" style="left:1035px;top:433px;width:12px;height:12px;background:#F4F4F4"></div>
<div class="blk" style="left:999px;top:457px;width:12px;height:12px;background:#C8C8C8"></div>
<div class="blk" style="left:999px;top:469px;width:12px;height:12px;background:#F4F4F4"></div>
<div class="blk" style="left:1011px;top:457px;width:12px;height:12px;background:#BDBDBD"></div>
<div class="blk" style="left:1011px;top:469px;width:12px;height:12px;background:#F4F4F4"></div>
<div class="blk" style="left:1023px;top:457px;width:12px;height:12px;background:#C5C5C5"></div>
<div class="blk" style="left:1023px;top:469px;width:12px;height:12px;background:#F4F4F4"></div>
<div class="blk" style="left:1035px;top:457px;width:12px;height:12px;background:#E0E0E0"></div>
<div class="blk" style="left:1035px;top:469px;width:12px;height:12px;background:#F4F4F4"></div>
<div class="blk" style="left:999px;top:493px;width:12px;height:12px;background:#C8C8C8"></div>
<div class="blk" style="left:999px;top:505px;width:12px;height:12px;background:#F4F4F4"></div>
<div class="blk" style="left:1011px;top:493px;width:12px;height:12px;background:#BDBDBD"></div>
<div class="blk" style="left:1011px;top:505px;width:12px;height:12px;background:#F4F4F4"></div>
<div class="blk" style="left:1023px;top:493px;width:12px;height:12px;background:#C5C5C5"></div>
<div class="blk" style="left:1023px;top:505px;width:12px;height:12px;background:#F4F4F4"></div>
<div class="blk" style="left:1035px;top:493px;width:12px;height:12px;background:#E0E0E0"></div>
<div class="blk" style="left:1035px;top:505px;width:12px;height:12px;background:#F4F4F4"></div>
<div class="blk" style="left:999px;top:529px;width:12px;height:12px;background:#C8C8C8"></div>
<div class="blk" style="left:999px;top:541px;width:12px;height:12px;background:#F4F4F4"></div>
<div class="blk" style="left:1011px;top:529px;width:12px;height:12px;background:#BDBDBD"></div>
<div class="blk" style="left:1011px;top:541px;width:12px;height:12px;background:#F4F4F4"></div>
<div class="blk" style="left:1023px;top:529px;width:12px;height:12px;background:#C5C5C5"></div>
<div class="blk" style="left:1023px;top:541px;width:12px;height:12px;background:#F4F4F4"></div>
<div class="blk" style="left:1035px;top:529px;width:12px;height:12px;background:#E0E0E0"></div>
<div class="blk" style="left:1035px;top:541px;width:12px;height:12px;background:#F4F4F4"></div>
<div class="blk" style="left:999px;top:565px;width:12px;height:12px;background:#C8C8C8"></div>
<div class="blk" style="left:999px;top:577px;width:12px;height:12px;background:#F4F4F4"></div>
<div class="blk" style="left:1011px;top:565px;width:12px;height:12px;background:#BDBDBD"></div>
<div class="blk" style="left:1011px;top:577px;width:12px;height:12px;background:#F4F4F4"></div>
<div class="blk" style="left:1023px;top:565px;width:12px;height:12px;background:#C5C5C5"></div>
<div class="blk" style="left:1023px;top:577px;width:12px;height:12px;background:#F4F4F4"></div>
<div class="blk" style="left:1035px;top:565px;width:12px;height:12px;background:#E0E0E0"></div>
<div class="blk" style="left:1035px;top:577px;width:12px;height:12px;background:#F4F4F4"></div>
<div class="blk" style="left:999px;top:601px;width:12px;height:12px;background:#C8C8C8"></div>
<div class="blk" style="left:999px;top:613px;width:12px;height:12px;background:#F4F4F4"></div>
<div class="blk" style="left:1011px;top:601px;width:12px;height:12px;background:#BDBDBD"></div>
<div class="blk" style="left:1011px;top:613px;width:12px;height:12px;background:#F4F4F4"></div>
<div class="blk" style="left:1023px;top:601px;width:12px;height:12px;background:#C5C5C5"></div>
<div class="blk" style="left:1023px;top:613px;width:12px;height:12px;background:#F4F4F4"></div>
<div class="blk" style="left:1035px;top:601px;width:12px;height:12px;background:#E0E0E0"></div>
<div class="blk" style="left:1035px;top:613px;width:12px;height:12px;background:#F4F4F4"></div>
<div class="blk" style="left:1083px;top:493px;width:36px;height:12px;background:#EBEBEB"></div>
<div class="a" style="left:213px;top:811px;width:1529px;height:37px;background:#FCEFD9;border-top:1px solid #E3E3E3;border-bottom:2px solid #DDDDDD"></div>
<div class="a" style="left:310px;top:812px;width:1px;height:35px;background:#E2E2E2"></div>
<div class="a" style="left:225px;top:820px;font-size:14px;line-height:20px;color:#333">合计:</div>
<div class="a num" style="left:884px;width:90px;top:820px;font-size:14px;line-height:20px;color:#333;text-align:right;letter-spacing:0.6px">1805.00</div>
<div class="a" style="left:1278px;top:860px;font-size:11px;line-height:16px;color:#333">每页显示</div>
<div class="a" style="left:1329px;top:854px;width:54px;height:29px;border:1px solid #DCDCDC;border-radius:2px;background:#fff"></div>
<div class="a" style="left:1337px;top:860px;font-size:12px;line-height:16px;color:#333">50</div>
<svg class="a" style="left:1365px;top:862px" width="12" height="8" viewBox="0 0 12 8"><path d="M1 1l5 5 5-5" fill="none" stroke="#555" stroke-width="1"/></svg>
<svg class="a" style="left:1408px;top:862px" width="9" height="12" viewBox="0 0 9 12"><path d="M1 1v10M8 1L3 6l5 5" fill="none" stroke="#999" stroke-width="1"/></svg>
<svg class="a" style="left:1432px;top:862px" width="8" height="12" viewBox="0 0 8 12"><path d="M7 1L2 6l5 5" fill="none" stroke="#999" stroke-width="1"/></svg>
<div class="a" style="left:1453px;top:860px;font-size:12px;line-height:16px;color:#333">第</div>
<div class="a" style="left:1471px;top:854px;width:54px;height:29px;border:1px solid #DCDCDC;border-radius:2px;background:#fff"></div>
<div class="a" style="left:1480px;top:860px;font-size:12px;line-height:16px;color:#333">1</div>
<div class="a" style="left:1532px;top:860px;font-size:12px;line-height:16px;color:#333">页</div>
<svg class="a" style="left:1556px;top:862px" width="8" height="12" viewBox="0 0 8 12"><path d="M1 1l5 5-5 5" fill="none" stroke="#999" stroke-width="1"/></svg>
<svg class="a" style="left:1579px;top:862px" width="9" height="12" viewBox="0 0 9 12"><path d="M1 1l5 5-5 5M8 1v10" fill="none" stroke="#999" stroke-width="1"/></svg>
<div class="a" style="left:1611px;top:860px;font-size:11px;line-height:16px;color:#333">共1页, 8条记录</div>
</body></html>
